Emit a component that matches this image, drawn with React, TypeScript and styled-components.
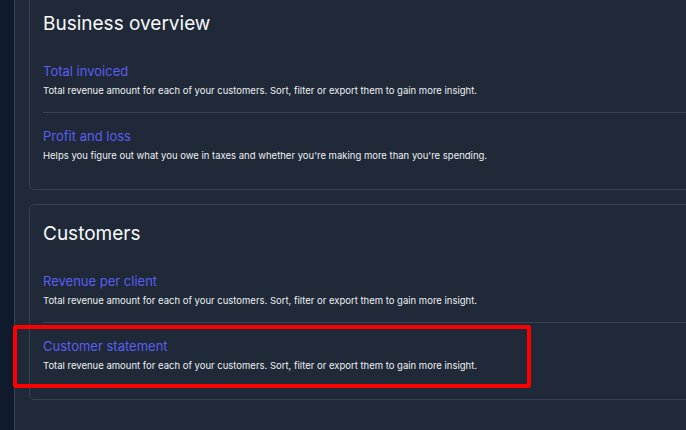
import React from 'react'
import styled, { createGlobalStyle } from 'styled-components'

const GlobalStyle = createGlobalStyle`
  html, body {
    margin: 0;
    padding: 0;
    background: #1f2937;
    overflow: hidden;
  }
  body {
    font-family: Inter, 'Noto Sans', sans-serif;
    -webkit-font-smoothing: antialiased;
  }
`

interface ReportItem {
  title: string
  description: string
  highlighted?: boolean
}

interface ReportSection {
  heading: string
  items: ReportItem[]
}

const REVENUE_TEXT = 'Total revenue amount for each of your customers. Sort, filter or export them to gain more insight.'

const sections: ReportSection[] = [
  {
    heading: 'Business overview',
    items: [
      { title: 'Total invoiced', description: REVENUE_TEXT },
      {
        title: 'Profit and loss',
        description: "Helps you figure out what you owe in taxes and whether you're making more than you're spending.",
      },
    ],
  },
  {
    heading: 'Customers',
    items: [
      { title: 'Revenue per client', description: REVENUE_TEXT },
      { title: 'Customer statement', description: REVENUE_TEXT, highlighted: true },
    ],
  },
]

const App = () => {
  return (
    <>
      <GlobalStyle />
      <Page>
        <Sidebar />
        <Main>
          {sections.map((section) => (
            <Card key={section.heading}>
              <Heading>{section.heading}</Heading>
              <List>
                {section.items.map((item) => (
                  <Item key={item.title}>
                    <ItemTitle href='#'>{item.title}</ItemTitle>
                    <ItemText>{item.description}</ItemText>
                    {item.highlighted && <Highlight />}
                  </Item>
                ))}
              </List>
            </Card>
          ))}
        </Main>
      </Page>
    </>
  )
}

export default App

const Page = styled.div`
  display: flex;
  width: 686px;
  height: 430px;
  overflow: hidden;
`

const Sidebar = styled.aside`
  flex: 0 0 14px;
  background: #101a2d;
  border-right: 1px solid #3a4558;
`

const Main = styled.main`
  flex: 1;
  display: flex;
  flex-direction: column;
  gap: 14px;
  margin-top: -6px;
  padding-left: 14px;
  min-width: 0;
`

const Card = styled.section`
  width: 720px;
  border: 1px solid #344153;
  border-radius: 5px;
  padding: 17px 0 12px 13px;
  box-sizing: border-box;
`

const Heading = styled.h2`
  margin: 0 0 12px;
  font-size: 19px;
  line-height: 24px;
  font-weight: 400;
  color: #f8fafc;
`

const List = styled.div`
  display: flex;
  flex-direction: column;
`

const Item = styled.div`
  position: relative;
  display: flex;
  flex-direction: column;
  gap: 4px;
  padding: 14px 0;
  & + & {
    border-top: 1px solid #364357;
  }
`

const ItemTitle = styled.a`
  font-size: 13px;
  line-height: 18px;
  color: #5b5ef2;
  text-decoration: none;
`

const ItemText = styled.p`
  margin: 0;
  font-size: 9.5px;
  line-height: 14px;
  color: #eef0f4;
`

const Highlight = styled.div`
  position: absolute;
  left: -30px;
  top: 2px;
  width: 518px;
  height: 63px;
  border: 4px solid #ff0000;
  border-radius: 3px;
  box-sizing: border-box;
  pointer-events: none;
`
